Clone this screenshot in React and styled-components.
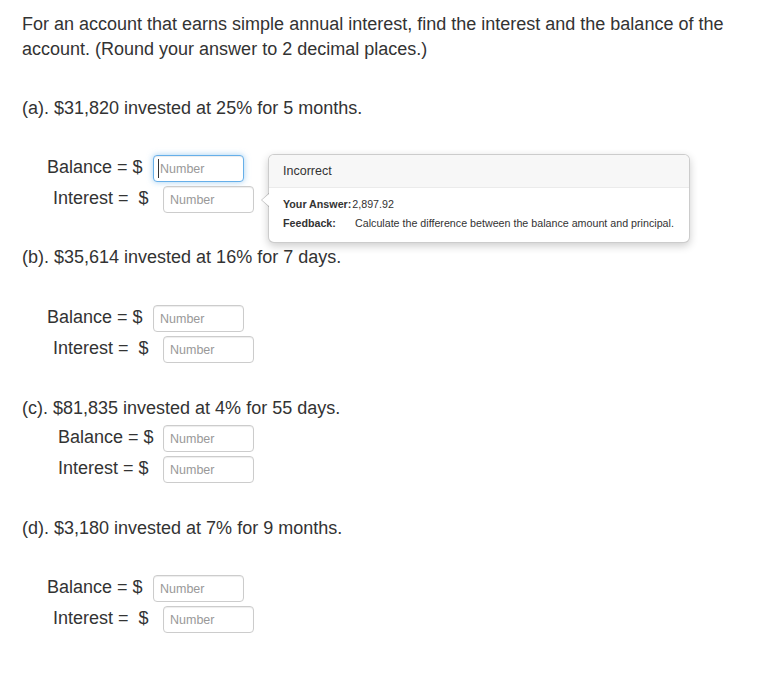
import React from "react";
import styled, { createGlobalStyle, css } from "styled-components";

const GlobalStyle = createGlobalStyle`
  html, body { margin: 0; padding: 0; background: #fff; }
  body {
    font-family: "Liberation Sans", Arial, Helvetica, sans-serif;
    color: #333;
  }
`;

const Page = styled.div`
  padding: 12px 0 40px 22px;
`;

const Intro = styled.p`
  margin: 0;
  font-size: 18px;
  line-height: 25px;
  width: 720px;
`;

const Heading = styled.div`
  margin-top: ${(p) => p.$mt}px;
  font-size: 18px;
  line-height: 24px;
`;

const Fields = styled.div`
  margin-top: ${(p) => p.$mt}px;
  display: flex;
  flex-direction: column;
  gap: 4px;
`;

const FieldRow = styled.div`
  display: flex;
  align-items: flex-start;
  padding-left: ${(p) => p.$indent}px;
`;

const Label = styled.span`
  display: inline-block;
  width: ${(p) => p.$w}px;
  font-size: 18px;
  line-height: 24px;
  white-space: pre;
`;

const InputWrap = styled.span`
  position: relative;
  display: inline-block;
`;

const Input = styled.input`
  display: block;
  box-sizing: border-box;
  width: 91px;
  height: 27px;
  margin: 0;
  padding: 0 6px;
  border: 1px solid #ccc;
  border-radius: 4px;
  font-family: "Liberation Sans", Arial, sans-serif;
  font-size: 12.5px;
  color: #555;
  background: #fff;
  box-shadow: inset 0 1px 1px rgba(0, 0, 0, 0.075);
  outline: none;
  &::placeholder { color: #999; }
  ${(p) =>
    p.$focused &&
    css`
      border-color: #66afe9;
      box-shadow: inset 0 1px 1px rgba(0, 0, 0, 0.075),
        0 0 6px rgba(102, 175, 233, 0.6);
    `}
`;

const Caret = styled.span`
  position: absolute;
  left: 5px;
  top: 4px;
  width: 1px;
  height: 19px;
  background: #333;
`;

const Popover = styled.div`
  position: absolute;
  left: calc(100% + 14px);
  top: -32px;
  box-sizing: border-box;
  width: 422px;
  height: 89px;
  background: #fff;
  border: 1px solid rgba(0, 0, 0, 0.2);
  border-radius: 6px;
  box-shadow: 0 3px 8px rgba(0, 0, 0, 0.2);
  z-index: 5;

  &::before,
  &::after {
    content: "";
    position: absolute;
    top: 38px;
    width: 0;
    height: 0;
    border-style: solid;
  }
  &::before {
    left: -8px;
    border-width: 7px 8px 7px 0;
    border-color: transparent rgba(0, 0, 0, 0.22) transparent transparent;
  }
  &::after {
    left: -7px;
    border-width: 7px 8px 7px 0;
    border-color: transparent #fff transparent transparent;
  }
`;

const PopTitle = styled.div`
  box-sizing: border-box;
  height: 33px;
  padding: 0 14px 1px;
  display: flex;
  align-items: center;
  background: #f7f7f7;
  border-bottom: 1px solid #ebebeb;
  border-radius: 5px 5px 0 0;
  font-size: 12.5px;
  color: #333;
`;

const PopBody = styled.div`
  padding: 6px 14px 0;
`;

const PopLine = styled.div`
  display: flex;
  align-items: center;
  height: 19px;
  font-size: 10.7px;
  color: #333;
`;

const PopKey = styled.span`
  font-weight: bold;
  display: inline-block;
  min-width: ${(p) => p.$w || 0}px;
  margin-right: 1px;
`;

function Field({ label, w, indent, focused, popover }) {
  return (
    <FieldRow $indent={indent}>
      <Label $w={w}>{label}</Label>
      <InputWrap>
        <Input placeholder="Number" $focused={focused} />
        {focused && <Caret />}
        {popover}
      </InputWrap>
    </FieldRow>
  );
}

const Feedback = (
  <Popover>
    <PopTitle>Incorrect</PopTitle>
    <PopBody>
      <PopLine>
        <PopKey>Your Answer:</PopKey>
        <span>2,897.92</span>
      </PopLine>
      <PopLine>
        <PopKey $w={71}>Feedback:</PopKey>
        <span>Calculate the difference between the balance amount and principal.</span>
      </PopLine>
    </PopBody>
  </Popover>
);

export default function App() {
  return (
    <>
      <GlobalStyle />
      <Page>
        <Intro>
          For an account that earns simple annual interest, find the interest and the balance of the
          account. (Round your answer to 2 decimal places.)
        </Intro>

        <Heading $mt={34}>(a). $31,820 invested at 25% for 5 months.</Heading>
        <Fields $mt={35}>
          <Field label="Balance = $" w={106} indent={25} focused />
          <Field label="Interest =  $" w={110} indent={31} popover={Feedback} />
        </Fields>

        <Heading $mt={32}>(b). $35,614 invested at 16% for 7 days.</Heading>
        <Fields $mt={36}>
          <Field label="Balance = $" w={106} indent={25} />
          <Field label="Interest =  $" w={110} indent={31} />
        </Fields>

        <Heading $mt={33}>(c). $81,835 invested at 4% for 55 days.</Heading>
        <Fields $mt={5}>
          <Field label="Balance = $" w={105} indent={36} />
          <Field label="Interest = $" w={105} indent={36} />
        </Fields>

        <Heading $mt={33}>(d). $3,180 invested at 7% for 9 months.</Heading>
        <Fields $mt={35}>
          <Field label="Balance = $" w={106} indent={25} />
          <Field label="Interest =  $" w={110} indent={31} />
        </Fields>
      </Page>
    </>
  );
}
